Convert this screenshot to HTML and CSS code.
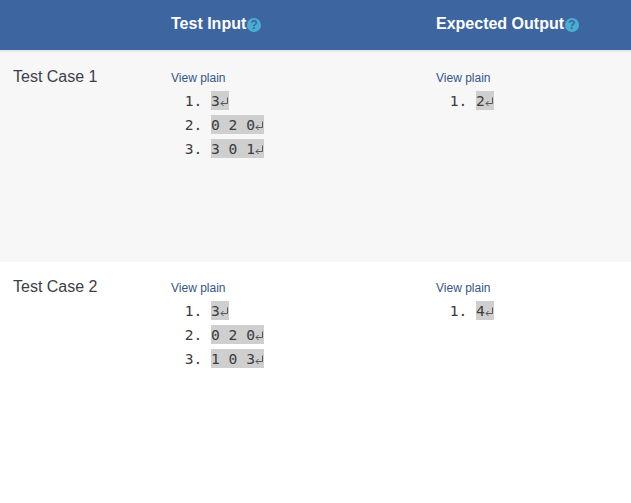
FILE: index.html
```html
<!DOCTYPE html>
<html lang="en">
    <head>
        <meta charset="UTF-8" />
        <title>Test Cases</title>
        <link rel="stylesheet" href="styles.css">
    </head>
    <body>
        <!-- Column headings -->
        <div class="row head">
            <div class="name"></div>
            <div class="col"><strong>Test Input</strong><span class="help">?</span></div>
            <div class="col"><strong>Expected Output</strong><span class="help">?</span></div>
        </div>

        <!-- Test Case 1 -->
        <div class="row case odd">
            <div class="name">Test Case 1</div>
            <div class="col">
                <a class="plain">View plain</a>
                <ol class="lines">
                    <li><span class="line">3<svg class="ret" viewBox="0 0 9 10"><path d="M7.5 0.5V6.5H1M3.5 4L1 6.5L3.5 9"/></svg></span></li>
                    <li><span class="line">0 2 0<svg class="ret" viewBox="0 0 9 10"><path d="M7.5 0.5V6.5H1M3.5 4L1 6.5L3.5 9"/></svg></span></li>
                    <li><span class="line">3 0 1<svg class="ret" viewBox="0 0 9 10"><path d="M7.5 0.5V6.5H1M3.5 4L1 6.5L3.5 9"/></svg></span></li>
                </ol>
            </div>
            <div class="col">
                <a class="plain">View plain</a>
                <ol class="lines">
                    <li><span class="line">2<svg class="ret" viewBox="0 0 9 10"><path d="M7.5 0.5V6.5H1M3.5 4L1 6.5L3.5 9"/></svg></span></li>
                </ol>
            </div>
        </div>

        <!-- Test Case 2 -->
        <div class="row case">
            <div class="name">Test Case 2</div>
            <div class="col">
                <a class="plain">View plain</a>
                <ol class="lines">
                    <li><span class="line">3<svg class="ret" viewBox="0 0 9 10"><path d="M7.5 0.5V6.5H1M3.5 4L1 6.5L3.5 9"/></svg></span></li>
                    <li><span class="line">0 2 0<svg class="ret" viewBox="0 0 9 10"><path d="M7.5 0.5V6.5H1M3.5 4L1 6.5L3.5 9"/></svg></span></li>
                    <li><span class="line">1 0 3<svg class="ret" viewBox="0 0 9 10"><path d="M7.5 0.5V6.5H1M3.5 4L1 6.5L3.5 9"/></svg></span></li>
                </ol>
            </div>
            <div class="col">
                <a class="plain">View plain</a>
                <ol class="lines">
                    <li><span class="line">4<svg class="ret" viewBox="0 0 9 10"><path d="M7.5 0.5V6.5H1M3.5 4L1 6.5L3.5 9"/></svg></span></li>
                </ol>
            </div>
        </div>
    </body>
</html>
```

FILE: styles.css
```css
html {
    background-color: #ffffff;
}

body {
    margin: 0;
    font-family: "Liberation Sans", Arial, sans-serif;
    color: #3a4048;
}

.row {
    display: grid;
    grid-template-columns: 171px 265px 1fr;
}

.head {
    height: 50px;
    align-items: center;
    background-color: #3d659f;
    border-bottom: 2px solid #e6e8ec;
    color: #ffffff;
    font-size: 16px;
}

.head .col {
    display: flex;
    align-items: center;
    padding-bottom: 2px;
}

.help {
    display: inline-block;
    width: 14px;
    height: 14px;
    margin-left: 1px;
    margin-top: 1px;
    border-radius: 50%;
    background-color: #4aaed3;
    color: #3d659f;
    font-size: 12px;
    font-weight: bold;
    line-height: 14px;
    text-align: center;
}

.case {
    height: 210px;
    padding-top: 15px;
    box-sizing: border-box;
}

.case + .case {
    height: 241px;
}

.odd {
    background-color: #f7f7f7;
}

.name {
    padding-left: 13px;
    font-size: 16px;
    line-height: 20px;
}

.plain {
    display: block;
    margin-top: 3px;
    font-size: 12px;
    line-height: 16px;
    color: #34558a;
}

.lines {
    margin: 5px 0 0;
    padding: 0 0 0 40px;
    font-family: "DejaVu Sans Mono", monospace;
    font-size: 14.6px;
    line-height: 19px;
    color: #3c3c3c;
}

.lines li {
    margin-bottom: 5px;
}

.line {
    display: inline-block;
    height: 19px;
    background-color: #cfcfcf;
    white-space: pre;
}

.ret {
    display: inline-block;
    width: 9px;
    height: 10px;
    vertical-align: -1px;
}

.ret path {
    fill: none;
    stroke: #4a4a4a;
    stroke-width: 0.9;
}
```
